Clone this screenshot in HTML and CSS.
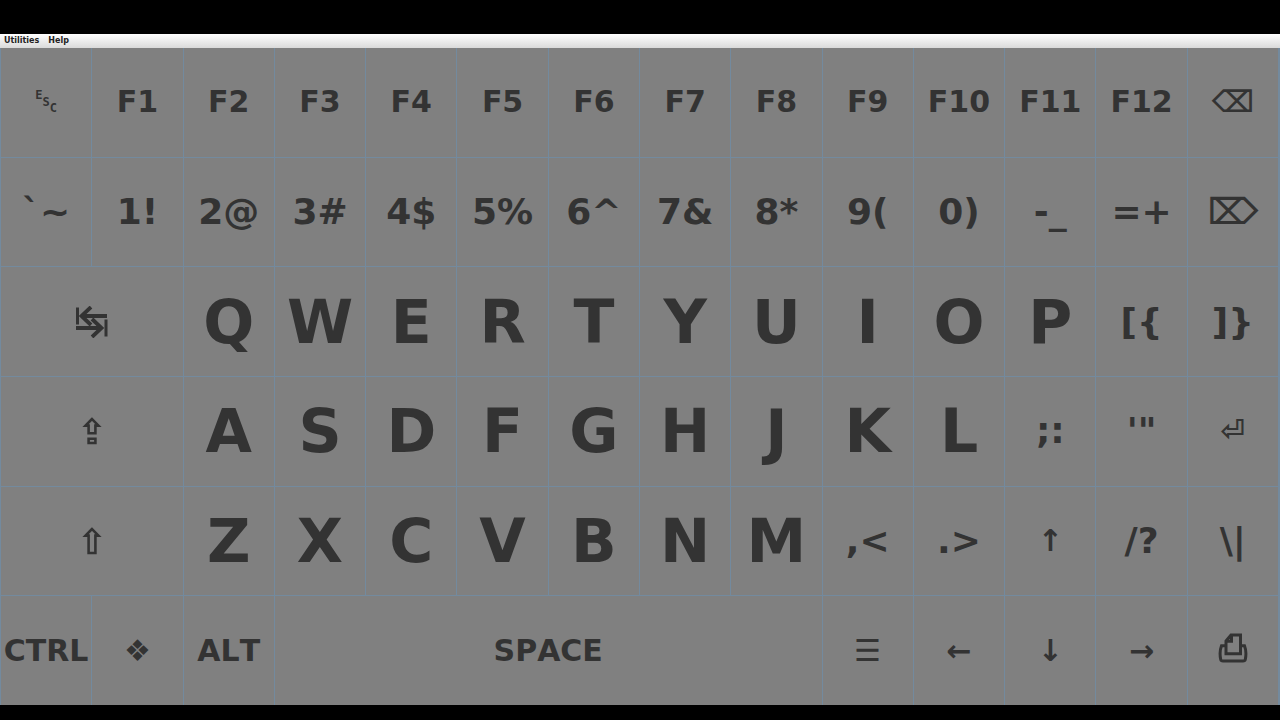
FILE: index.html
```html
<!DOCTYPE html>
<html lang="en">

<head>
    <meta charset="UTF-8">
    <meta name="viewport" content="width=device-width, initial-scale=1.0">
    <title>Keyboard</title>
    <link rel="stylesheet" href="styles.css">
</head>

<body>
    <nav class="menu-bar">
        <button type="button">Utilities</button>
        <button type="button">Help</button>
    </nav>

    <main class="keyboard">
        <!-- function keys -->
        <button type="button" aria-label="Escape">
            <span class="escape"><span>E</span><span>S</span><span>C</span></span>
        </button>
        <button type="button" class="small">F1</button>
        <button type="button" class="small">F2</button>
        <button type="button" class="small">F3</button>
        <button type="button" class="small">F4</button>
        <button type="button" class="small">F5</button>
        <button type="button" class="small">F6</button>
        <button type="button" class="small">F7</button>
        <button type="button" class="small">F8</button>
        <button type="button" class="small">F9</button>
        <button type="button" class="small">F10</button>
        <button type="button" class="small">F11</button>
        <button type="button" class="small">F12</button>
        <button type="button" class="small">&#x232B;</button>

        <!-- numbers -->
        <button type="button">`~</button>
        <button type="button">1!</button>
        <button type="button">2@</button>
        <button type="button">3#</button>
        <button type="button">4$</button>
        <button type="button">5%</button>
        <button type="button">6^</button>
        <button type="button">7&amp;</button>
        <button type="button">8*</button>
        <button type="button">9(</button>
        <button type="button">0)</button>
        <button type="button">-_</button>
        <button type="button">=+</button>
        <button type="button">&#x2326;</button>

        <!-- top letters -->
        <button type="button" class="wide" aria-label="Tab">
            <svg width="32" height="32" viewBox="0 0 32 32">
                <path stroke-width="3" d="M1.5 1.5v17M30 13.500v17" />
                <path stroke-width="3.8" d="M31 10H5M15 1L5.500 10L15 19M0 22H26M16 13l9.500 9L16 31" />
            </svg>
        </button>
        <button type="button" class="letter">Q</button>
        <button type="button" class="letter">W</button>
        <button type="button" class="letter">E</button>
        <button type="button" class="letter">R</button>
        <button type="button" class="letter">T</button>
        <button type="button" class="letter">Y</button>
        <button type="button" class="letter">U</button>
        <button type="button" class="letter">I</button>
        <button type="button" class="letter">O</button>
        <button type="button" class="letter">P</button>
        <button type="button">[{</button>
        <button type="button">]}</button>

        <!-- home letters -->
        <button type="button" class="wide" aria-label="Caps Lock">
            <svg width="20" height="28" viewBox="0 0 20 28">
                <path stroke-width="2.6" d="M10 2L3.500 8.600H6.600V16.300H13.400V8.600H16.500ZM6.600 21.800H13.400V26H6.600Z" />
            </svg>
        </button>
        <button type="button" class="letter">A</button>
        <button type="button" class="letter">S</button>
        <button type="button" class="letter">D</button>
        <button type="button" class="letter">F</button>
        <button type="button" class="letter">G</button>
        <button type="button" class="letter">H</button>
        <button type="button" class="letter">J</button>
        <button type="button" class="letter">K</button>
        <button type="button" class="letter">L</button>
        <button type="button">;:</button>
        <button type="button">'"</button>
        <button type="button" class="small">&#x23CE;</button>

        <!-- bottom letters -->
        <button type="button" class="wide" aria-label="Shift">
            <svg width="20" height="28" viewBox="0 0 20 28">
                <path stroke-width="2.6" d="M10 2L3.500 8.600H6.600V26H13.400V8.600H16.500Z" />
            </svg>
        </button>
        <button type="button" class="letter">Z</button>
        <button type="button" class="letter">X</button>
        <button type="button" class="letter">C</button>
        <button type="button" class="letter">V</button>
        <button type="button" class="letter">B</button>
        <button type="button" class="letter">N</button>
        <button type="button" class="letter">M</button>
        <button type="button">,&lt;</button>
        <button type="button">.&gt;</button>
        <button type="button" class="small">&#x2191;</button>
        <button type="button">/?</button>
        <button type="button">\|</button>

        <!-- modifiers -->
        <button type="button" class="small">CTRL</button>
        <button type="button" class="small">&#x2756;</button>
        <button type="button" class="small">ALT</button>
        <button type="button" class="small space">SPACE</button>
        <button type="button" class="small">&#x2630;</button>
        <button type="button" class="small">&#x2190;</button>
        <button type="button" class="small">&#x2193;</button>
        <button type="button" class="small">&#x2192;</button>
        <button type="button" class="print" aria-label="Print Screen">
            <svg width="30" height="30" viewBox="0 0 30 30">
                <path stroke-width="3" d="M8 8L13 2H22.500V20.800H8ZM8 8.300H13.500V2M8 12.700H3.500C1.800 17 1.800 22 2.700 26.500Q3 28 5 28H25Q27 28 27.300 26.500C28.200 22 28.200 17 26.500 12.700H22.500" />
            </svg>
        </button>
    </main>
</body>

</html>
```

FILE: styles.css
```css
body {
    font-family: "DejaVu Sans", Verdana, sans-serif;
    background-color: #000;
    margin: 0;
    padding: 34px 0 15px;
    box-sizing: border-box;
    min-height: 100vh;
    display: flex;
    flex-direction: column;
}

button {
    font-family: inherit;
    font-weight: bold;
    margin: 0;
    padding: 0;
    border: none;
    background: none;
    cursor: pointer;
}

.menu-bar {
    display: flex;
    gap: 9px;
    height: 14px;
    padding: 0 4px;
    background: linear-gradient(#fff, #dadada);
}

.menu-bar button {
    font-size: 8px;
    line-height: 14px;
    color: #222;
}

/* the gaps show the background as grid lines */
.keyboard {
    flex: 1;
    display: grid;
    grid-template-columns: repeat(14, minmax(0, 1fr));
    grid-template-rows: repeat(6, minmax(0, 1fr));
    gap: 1px;
    background-color: #738a9e;
    border-left: 1px solid #738a9e;
    border-right: 2px solid #738a9e;
}

.keyboard button {
    font-size: 36px;
    line-height: 44px;
    font-kerning: none;
    white-space: nowrap;
    color: #333;
    background-color: #808080;
}

.keyboard .small {
    font-size: 30px;
}

.keyboard .letter {
    font-size: 60px;
    line-height: 70px;
}

.keyboard .wide {
    grid-column: span 2;
}

.keyboard .space {
    grid-column: span 6;
}

.keyboard .print {
    padding-bottom: 6px;
}

/* three small letters stepping down */
.escape {
    display: flex;
    justify-content: center;
    height: 22px;
    font-family: "DejaVu Sans Mono", monospace;
    font-size: 12px;
    line-height: 9px;
}

.escape span:nth-child(2) {
    align-self: center;
}

.escape span:nth-child(3) {
    align-self: flex-end;
}

.keyboard svg {
    display: block;
    margin: 0 auto;
    fill: none;
    stroke: #333;
}

.keyboard button:hover {
    background-color: #8c8c8c;
}
```
